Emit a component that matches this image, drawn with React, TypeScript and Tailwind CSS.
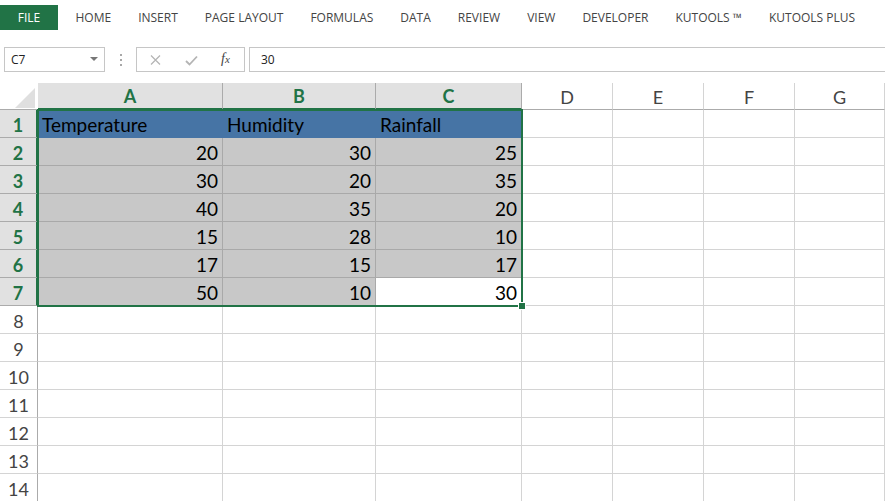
import React from "react";

const tabs = ["HOME", "INSERT", "PAGE LAYOUT", "FORMULAS", "DATA", "REVIEW", "VIEW", "DEVELOPER", "KUTOOLS ™", "KUTOOLS PLUS"];

const cols = [
  { l: "A", sel: true },
  { l: "B", sel: true },
  { l: "C", sel: true },
  { l: "D", sel: false },
  { l: "E", sel: false },
  { l: "F", sel: false },
  { l: "G", sel: false },
];

const data: (string | number)[][] = [
  [20, 30, 25],
  [30, 20, 35],
  [40, 35, 20],
  [15, 28, 10],
  [17, 15, 17],
  [50, 10, 30],
];

export default function App() {
  const rows = Array.from({ length: 14 }, (_, i) => i + 1);
  return (
    <div className="w-[885px] h-[501px] overflow-hidden bg-white" style={{ fontFamily: "'Open Sans', 'Noto Sans', sans-serif" }}>
      {/* Ribbon tabs */}
      <div className="flex items-center h-[25px] mt-[5px] text-[12px] text-[#444444]">
        <div className="w-[58px] h-[25px] bg-[#217346] text-white flex items-center justify-center">FILE</div>
        <div className="flex items-center ml-[4px]">
          {tabs.map((t) => (
            <div key={t} className="px-[13.5px] whitespace-nowrap">{t}</div>
          ))}
        </div>
      </div>

      {/* Formula bar */}
      <div className="flex items-center h-[25px] mt-[17px]">
        <div className="ml-[4px] w-[101px] h-[25px] border border-[#c6c6c6] flex items-center justify-between pl-[6px] pr-[6px] text-[12px] text-[#222]">
          <span>C7</span>
          <svg width="8" height="5" viewBox="0 0 8 5"><path d="M0 0 L8 0 L4 4 Z" fill="#777" /></svg>
        </div>
        <div className="w-[31px] flex flex-col items-center justify-center gap-[3px]">
          <div className="w-[2px] h-[2px] bg-[#a8a8a8]" />
          <div className="w-[2px] h-[2px] bg-[#a8a8a8]" />
          <div className="w-[2px] h-[2px] bg-[#a8a8a8]" />
        </div>
        <div className="w-[109px] h-[25px] border border-[#c6c6c6] flex items-center relative">
          <svg className="absolute left-[13px] top-[7px]" width="11" height="10" viewBox="0 0 11 10">
            <path d="M1 0.5 L10 9.5 M10 0.5 L1 9.5" stroke="#b4b4b4" strokeWidth="1.2" />
          </svg>
          <svg className="absolute left-[48px] top-[7px]" width="13" height="11" viewBox="0 0 13 11">
            <path d="M1 6 L4.5 9.5 L12 1.5" stroke="#b4b4b4" strokeWidth="1.8" fill="none" />
          </svg>
          <span className="absolute left-[84px] top-[2px] text-[14px] italic text-[#444] leading-[18px]" style={{ fontFamily: "'Liberation Serif', serif" }}>
            f<span className="text-[11px]">x</span>
          </span>
        </div>
        <div className="ml-[4px] flex-1 h-[25px] border border-[#c6c6c6] border-r-0 flex items-center pl-[11px] text-[12px] text-[#222]">30</div>
      </div>

      {/* Sheet */}
      <div className="relative mt-[11px]" style={{ fontFamily: "Lato, 'Noto Sans', sans-serif" }}>
        <div className="grid grid-cols-[38px_185px_153px_146px_91px_91px_91px_1fr]">
          {/* corner */}
          <div className="h-[27px] bg-white border-b border-[#ababab] relative">
            <svg className="absolute left-[15px] top-[5px]" width="20" height="20" viewBox="0 0 20 20">
              <path d="M0 20 L20 0 L20 20 Z" fill="#dfdfdf" />
            </svg>
          </div>
          {cols.map((c) =>
            c.sel ? (
              <div key={c.l} className="h-[27px] pt-[2px] bg-[#e1e1e1] border-r border-[#ababab] border-b-2 border-b-[#217346] flex items-center justify-center text-[18px] font-bold text-[#217346]">
                {c.l}
              </div>
            ) : (
              <div key={c.l} className="h-[27px] pt-[2px] bg-white border-r border-[#d4d4d4] border-b border-b-[#ababab] flex items-center justify-center text-[18px] text-[#444]">
                {c.l}
              </div>
            )
          )}
          {rows.map((r) => {
            const sel = r <= 7;
            const cells: React.ReactNode[] = [];
            cells.push(
              sel ? (
                <div key={`h${r}`} className="h-[28px] pt-[3px] bg-[#e1e1e1] border-b border-[#ababab] border-r-2 border-r-[#217346] flex items-center justify-center text-[18px] font-bold text-[#217346]">
                  {r}
                </div>
              ) : (
                <div key={`h${r}`} className="h-[28px] pt-[3px] bg-white border-b border-[#d4d4d4] border-r border-r-[#ababab] flex items-center justify-center text-[18px] text-[#444]">
                  {r}
                </div>
              )
            );
            for (let ci = 0; ci < 7; ci++) {
              const key = `${r}-${ci}`;
              if (r === 1 && ci < 3) {
                const label = ["Temperature", "Humidity", "Rainfall"][ci];
                cells.push(
                  <div key={key} className="h-[28px] pt-[3px] bg-[#4674a5] border-r border-b border-[#4674a5] flex items-center pl-[4px] text-[19px] text-black">
                    {label}
                  </div>
                );
              } else if (r >= 2 && r <= 7 && ci < 3) {
                const active = r === 7 && ci === 2;
                cells.push(
                  <div
                    key={key}
                    className={
                      active
                        ? "h-[28px] pt-[3px] bg-white border-r border-b border-[#d4d4d4] flex items-center justify-end pr-[4px] text-[19px] text-black"
                        : "h-[28px] pt-[3px] bg-[#c8c8c8] border-r border-b border-[#a9a9a9] flex items-center justify-end pr-[4px] text-[19px] text-black"
                    }
                  >
                    {data[r - 2][ci]}
                  </div>
                );
              } else {
                cells.push(<div key={key} className="h-[28px] bg-white border-r border-b border-[#d4d4d4]" />);
              }
            }
            return cells;
          })}
        </div>
        {/* selection */}
        <div className="absolute left-[37px] top-[26px] w-[486px] h-[198px] border-2 border-[#217346] pointer-events-none" />
        <div className="absolute left-[519px] top-[220px] w-[6px] h-[6px] bg-[#217346] border border-white box-content -translate-x-[1px] -translate-y-[1px]" />
      </div>
    </div>
  );
}
